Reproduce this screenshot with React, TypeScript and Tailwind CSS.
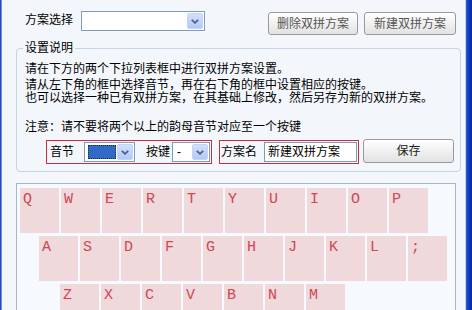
const Chevron = () => (
  <svg width="8" height="5" viewBox="0 0 8 5" fill="none">
    <path d="M0.8 0.8 L4 3.8 L7.2 0.8" stroke="#4d6185" strokeWidth="1.8" />
  </svg>
)

const DropButton = () => (
  <div className="flex w-[16px] items-center justify-center rounded-[2px] border border-[#c3d3fd] bg-gradient-to-b from-[#d2e0fd] to-[#b3c8f6]">
    <Chevron />
  </div>
)

const Combo = ({ className, children }: { className: string; children?: React.ReactNode }) => (
  <div className={`flex border border-[#7f9db9] bg-white p-[1px] ${className}`}>
    <div className="flex flex-1 items-center">{children}</div>
    <DropButton />
  </div>
)

const XpButton = ({ className, label }: { className: string; label: string }) => (
  <button className={`flex items-center justify-center rounded-[3px] border border-[#9a9a9a] bg-gradient-to-b from-white to-[#e2e2e2] leading-[14px] ${className}`}>
    {label}
  </button>
)

const rows = [
  { offset: 'pl-[3px]', keys: ['Q', 'W', 'E', 'R', 'T', 'Y', 'U', 'I', 'O', 'P'] },
  { offset: 'pl-[22px]', keys: ['A', 'S', 'D', 'F', 'G', 'H', 'J', 'K', 'L', ';'] },
  { offset: 'pl-[43px]', keys: ['Z', 'X', 'C', 'V', 'B', 'N', 'M'] },
]

export default function App() {
  return (
    <div className="flex h-[310px] w-[472px] overflow-hidden bg-[#f3f7fb] font-['Liberation_Sans','Noto_Sans_CJK_SC',sans-serif] text-[12px] text-black">
      <div className="w-[2px] shrink-0 border-r border-[#6f8fd8] bg-[#1e4fc8]" />

      <div className="flex w-[463px] shrink-0 flex-col">
        {/* top row */}
        <div className="flex items-start pl-[23px] pt-[11px]">
          <span className="mt-[2px] leading-[14px]">方案选择</span>
          <Combo className="ml-[8px] h-[20px] w-[124px]" />
          <XpButton className="ml-[63px] mt-[1px] h-[23px] w-[90px] text-[#555]" label="删除双拼方案" />
          <XpButton className="ml-[6px] mt-[1px] h-[23px] w-[92px] text-[#555]" label="新建双拼方案" />
        </div>

        {/* settings group */}
        <fieldset className="ml-[14px] mt-[6px] w-[440px] rounded-[4px] border border-[#c4d4e2] pb-[7px] pl-[6px] pr-[6px]">
          <legend className="px-[2px] leading-[14px]">设置说明</legend>
          <div className="ml-[2px] leading-[12px]">
            <p className="mt-[8px]">请在下方的两个下拉列表框中进行双拼方案设置。</p>
            <p className="mt-[4px] leading-[13px]">请从左下角的框中选择音节，再在右下角的框中设置相应的按键。</p>
            <p className="leading-[13px]">也可以选择一种已有双拼方案，在其基础上修改，然后另存为新的双拼方案。</p>
            <p className="mt-[16px]">注意：请不要将两个以上的韵母音节对应至一个按键</p>
          </div>
          <div className="mt-[7px] flex items-start">
            <div className="ml-[23px] flex h-[24px] w-[166px] items-center border border-[#c8303c] pl-[3px]">
              <span className="leading-[14px]">音节</span>
              <Combo className="ml-[10px] h-[20px] w-[51px]">
                <div className="ml-[2px] h-[14px] w-[28px] border border-dotted border-[#1b2c4c] bg-[#316ac5]" />
              </Combo>
              <span className="ml-[11px] leading-[14px]">按键</span>
              <Combo className="ml-[2px] h-[20px] w-[38px]">
                <span className="ml-[3px] leading-[14px]">-</span>
              </Combo>
            </div>
            <div className="ml-[7px] flex h-[24px] w-[140px] items-center border border-[#c8303c] pl-[1px]">
              <span className="leading-[14px]">方案名</span>
              <div className="ml-[7px] flex h-[20px] w-[93px] items-center border border-[#7f9db9] bg-white pl-[3px] leading-[14px]">
                新建双拼方案
              </div>
            </div>
            <XpButton className="ml-[4px] -mt-[1px] h-[24px] w-[91px] text-[#222]" label="保存" />
          </div>
        </fieldset>

        {/* keyboard */}
        <div className="ml-[14px] mt-[11px] w-[440px] flex-1 border border-[#a9b7c4] bg-[#f6faff] pt-[4px]">
          {rows.map((row, i) => (
            <div key={i} className={`mb-[3px] flex gap-[2px] ${row.offset}`}>
              {row.keys.map((k) => (
                <div
                  key={k}
                  className="h-[45px] w-[39px] bg-[#efd9da] pl-[3px] pt-[3px] font-['Liberation_Mono',monospace] text-[15px] leading-[18px] text-[#cf4656]"
                >
                  {k}
                </div>
              ))}
            </div>
          ))}
        </div>
      </div>

      <div className="w-[1px] shrink-0 bg-[#c9d3e0]" />
      <div className="flex-1 bg-gradient-to-r from-[#2a5ad8] via-[#0b36c4] to-[#0a2a98]" />
    </div>
  )
}
